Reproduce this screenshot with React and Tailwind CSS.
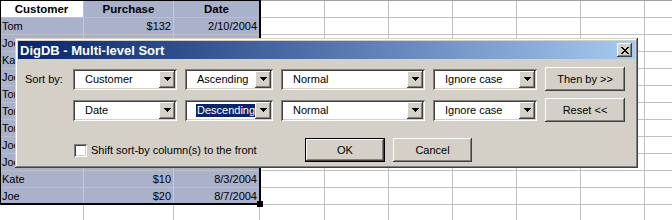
const SHEET_ROWS = [
  ['Customer', 'Purchase', 'Date'],
  ['Tom', '$132', '2/10/2004'],
  ['Joe', '', ''],
  ['Kate', '', ''],
  ['Joe', '', ''],
  ['Tom', '', ''],
  ['Tom', '', ''],
  ['Tom', '', ''],
  ['Joe', '', ''],
  ['Joe', '', ''],
  ['Kate', '$10', '8/3/2004'],
  ['Joe', '$20', '8/7/2004'],
  ['', '', ''],
];

const RAISED =
  'bg-[#d4d0c8] shadow-[inset_-1px_-1px_0_#404040,inset_1px_1px_0_#ffffff,inset_-2px_-2px_0_#808080,inset_2px_2px_0_#d4d0c8]';
const SUNKEN =
  'shadow-[inset_1px_1px_0_#808080,inset_-1px_-1px_0_#ffffff,inset_2px_2px_0_#404040,inset_-2px_-2px_0_#d4d0c8]';

function EmptyCols() {
  return (
    <>
      <div className="w-[65px] shrink-0 h-full border-r border-[#c0c0c0]" />
      <div className="w-[64px] shrink-0 h-full border-r border-[#c0c0c0]" />
      <div className="w-[64px] shrink-0 h-full border-r border-[#c0c0c0]" />
      <div className="w-[64px] shrink-0 h-full border-r border-[#c0c0c0]" />
      <div className="w-[64px] shrink-0 h-full border-r border-[#c0c0c0]" />
      <div className="w-[64px] shrink-0 h-full border-r border-[#c0c0c0]" />
      <div className="w-[64px] shrink-0 h-full border-r border-[#c0c0c0]" />
    </>
  );
}

function SheetRow({ row, index }) {
  const header = index === 0;
  const selected = index < 12;
  const sel = selected ? 'bg-[#a9b1cb] border-[#c6cad8]' : 'border-[#c0c0c0]';
  const txt = header ? 'font-bold text-[11.5px] justify-center' : 'text-[11px]';
  return (
    <div className="flex h-[17px] border-b border-[#c0c0c0]">
      <div
        className={`w-[84px] shrink-0 h-full border-r flex items-end pb-[1px] px-[2px] leading-[13px] ${txt} ${
          header ? 'bg-white border-[#c0c0c0]' : sel
        }`}
      >
        {row[0]}
      </div>
      <div
        className={`w-[90px] shrink-0 h-full border-r flex items-end pb-[1px] px-[2px] leading-[13px] ${txt} ${
          header ? '' : 'justify-end'
        } ${sel}`}
      >
        {row[1]}
      </div>
      <div
        className={`w-[86px] shrink-0 h-full border-r flex items-end pb-[1px] px-[2px] leading-[13px] ${txt} ${
          header ? '' : 'justify-end'
        } ${sel}`}
      >
        {row[2]}
      </div>
      <EmptyCols />
    </div>
  );
}

function Arrow() {
  return (
    <svg width="7" height="4" viewBox="0 0 7 4" shapeRendering="crispEdges">
      <path d="M0 0h7v1H0zM1 1h5v1H1zM2 2h3v1H2zM3 3h1v1H3z" fill="#000" />
    </svg>
  );
}

function Combo({ width, value, highlight }) {
  return (
    <div className={`${width} h-[21px] shrink-0 bg-white flex p-[2px] ${SUNKEN}`}>
      <div className="flex-1 flex items-center pl-[9px] overflow-hidden whitespace-nowrap">
        <span className={`px-[1px] leading-[13px] ${highlight ? 'bg-[#0a246a] text-white' : 'text-black'}`}>
          {value}
        </span>
      </div>
      <div className={`w-[16px] h-[17px] flex items-center justify-center ${RAISED}`}>
        <Arrow />
      </div>
    </div>
  );
}

function Button({ width, children, isDefault }) {
  return (
    <div
      className={`${width} h-[24px] shrink-0 flex items-center justify-center text-black ${RAISED} ${
        isDefault ? 'border border-black' : ''
      }`}
    >
      {children}
    </div>
  );
}

export default function App() {
  return (
    <div className="relative w-[672px] h-[220px] overflow-hidden bg-white font-['Liberation_Sans',Arial,sans-serif] text-black">
      <div className="border-t border-[#a0a0a0]">
        {SHEET_ROWS.map((r, i) => (
          <SheetRow key={i} row={r} index={i} />
        ))}
      </div>

      {/* selection outline + fill handle */}
      <div className="absolute left-[-1px] top-[-1px] w-[262px] h-[206px] border-2 border-black pointer-events-none" />
      <div className="absolute left-[257px] top-[201px] w-[6px] h-[6px] bg-black" />

      {/* dialog */}
      <div className="absolute left-[15px] top-[38px] w-[623px] h-[130px] bg-[#d4d0c8] p-[3px] text-[11px] shadow-[inset_-1px_-1px_0_#404040,inset_1px_1px_0_#d4d0c8,inset_-2px_-2px_0_#808080,inset_2px_2px_0_#ffffff]">
        <div className="h-[18px] flex items-center justify-between pl-[2px] pr-[3px] bg-linear-to-r from-[#0a246a] to-[#a6caf0]">
          <span className="text-white font-bold text-[13px] leading-none">DigDB - Multi-level Sort</span>
          <div className={`w-[15px] h-[14px] flex items-center justify-center ${RAISED}`}>
            <svg width="8" height="7" viewBox="0 0 8 7" shapeRendering="crispEdges">
              <path
                d="M0 0h2v1h1v1h2V1h1V0h2v1H7v1H6v1H5v1h1v1h1v1h1v1H6V6H5V5H3v1H2v1H0V6h1V5h1V4h1V3H2V2H1V1H0z"
                fill="#000"
              />
            </svg>
          </div>
        </div>

        <div className="px-[7px]">
          <div className="mt-[8px] flex items-center gap-2 h-[24px]">
            <div className="w-[40px] shrink-0">Sort by:</div>
            <Combo width="w-[104px]" value="Customer" />
            <Combo width="w-[88px]" value="Ascending" />
            <Combo width="w-[144px]" value="Normal" />
            <Combo width="w-[104px]" value="Ignore case" />
            <Button width="w-[80px]">Then by &gt;&gt;</Button>
          </div>

          <div className="mt-[7px] flex items-center gap-2 h-[24px]">
            <div className="w-[40px] shrink-0" />
            <Combo width="w-[104px]" value="Date" />
            <Combo width="w-[88px]" value="Descending" highlight />
            <Combo width="w-[144px]" value="Normal" />
            <Combo width="w-[104px]" value="Ignore case" />
            <Button width="w-[80px]">Reset &lt;&lt;</Button>
          </div>

          <div className="mt-[16px] flex items-center h-[24px]">
            <div className="ml-[49px] w-[231px] shrink-0 flex items-center gap-[4px]">
              <div className={`w-[13px] h-[13px] bg-white ${SUNKEN}`} />
              <span>Shift sort-by column(s) to the front</span>
            </div>
            <Button width="w-[80px]" isDefault>OK</Button>
            <div className="ml-[8px]">
              <Button width="w-[79px]">Cancel</Button>
            </div>
          </div>
        </div>
      </div>
    </div>
  );
}
